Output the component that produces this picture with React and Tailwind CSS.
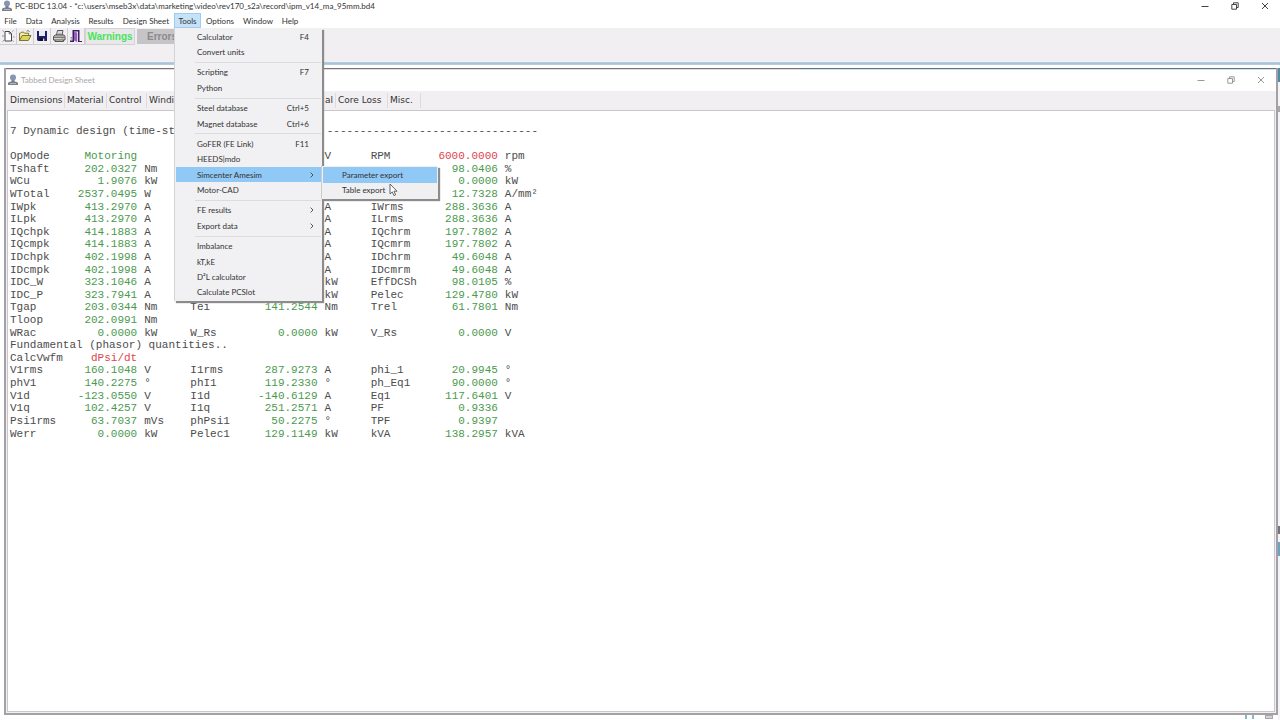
import React from 'react';

const MENUS_BEFORE = [
  { label: 'File', width: 'w-[21px]' },
  { label: 'Data', width: 'w-[26px]' },
  { label: 'Analysis', width: 'w-[37px]' },
  { label: 'Results', width: 'w-[34px]' },
  { label: 'Design Sheet', width: 'w-[56px]' },
];

const MENUS_AFTER = [
  { label: 'Options', width: 'w-[38px]' },
  { label: 'Window', width: 'w-[38px]' },
  { label: 'Help', width: 'w-[26px]' },
];

const TOOL_ITEMS = [
  { label: 'Calculator', keys: 'F4' },
  { label: 'Convert units' },
  null,
  { label: 'Scripting', keys: 'F7' },
  { label: 'Python' },
  null,
  { label: 'Steel database', keys: 'Ctrl+5' },
  { label: 'Magnet database', keys: 'Ctrl+6' },
  null,
  { label: 'GoFER (FE Link)', keys: 'F11' },
  { label: 'HEEDS|mdo' },
  { label: 'Simcenter Amesim', children: ['Parameter export', 'Table export'] },
  { label: 'Motor-CAD' },
  null,
  { label: 'FE results', children: [] },
  { label: 'Export data', children: [] },
  null,
  { label: 'Imbalance' },
  { label: 'kT,kE' },
  { label: 'D²L calculator' },
  { label: 'Calculate PCSlot' },
];

const TABS = [
  { label: 'Dimensions', width: 'w-[57px]' },
  { label: 'Material', width: 'w-[42px]' },
  { label: 'Control', width: 'w-[40px]' },
  { label: 'Windi', width: 'w-[61px]' },
  { label: 'al', width: 'w-[128px] text-right' },
  { label: 'Core Loss', width: 'w-[52px]' },
  { label: 'Misc.', width: 'w-[33px]' },
];

// label, value, unit for each of the three column groups
const ROWS = [
  ['OpMode', 'Motoring', '', '', '', 'V', 'RPM', '6000.0000', 'rpm'],
  ['Tshaft', '202.0327', 'Nm', '', '', '', '', '98.0406', '%'],
  ['WCu', '1.9076', 'kW', '', '', '', '', '0.0000', 'kW'],
  ['WTotal', '2537.0495', 'W', '', '', '', '', '12.7328', 'A/mm²'],
  ['IWpk', '413.2970', 'A', '', '', 'A', 'IWrms', '288.3636', 'A'],
  ['ILpk', '413.2970', 'A', '', '', 'A', 'ILrms', '288.3636', 'A'],
  ['IQchpk', '414.1883', 'A', '', '', 'A', 'IQchrm', '197.7802', 'A'],
  ['IQcmpk', '414.1883', 'A', '', '', 'A', 'IQcmrm', '197.7802', 'A'],
  ['IDchpk', '402.1998', 'A', '', '', 'A', 'IDchrm', '49.6048', 'A'],
  ['IDcmpk', '402.1998', 'A', '', '', 'A', 'IDcmrm', '49.6048', 'A'],
  ['IDC_W', '323.1046', 'A', '', '', 'kW', 'EffDCSh', '98.0105', '%'],
  ['IDC_P', '323.7941', 'A', '', '', 'kW', 'Pelec', '129.4780', 'kW'],
  ['Tgap', '203.0344', 'Nm', 'Tei', '141.2544', 'Nm', 'Trel', '61.7801', 'Nm'],
  ['Tloop', '202.0991', 'Nm', '', '', '', '', '', ''],
  ['WRac', '0.0000', 'kW', 'W_Rs', '0.0000', 'kW', 'V_Rs', '0.0000', 'V'],
  ['Fundamental (phasor) quantities..'],
  ['CalcVwfm', 'dPsi/dt', '', '', '', '', '', '', ''],
  ['V1rms', '160.1048', 'V', 'I1rms', '287.9273', 'A', 'phi_1', '20.9945', '°'],
  ['phV1', '140.2275', '°', 'phI1', '119.2330', '°', 'ph_Eq1', '90.0000', '°'],
  ['V1d', '-123.0550', 'V', 'I1d', '-140.6129', 'A', 'Eq1', '117.6401', 'V'],
  ['V1q', '102.4257', 'V', 'I1q', '251.2571', 'A', 'PF', '0.9336', ''],
  ['Psi1rms', '63.7037', 'mVs', 'phPsi1', '50.2275', '°', 'TPF', '0.9397', ''],
  ['Werr', '0.0000', 'kW', 'Pelec1', '129.1149', 'kW', 'kVA', '138.2957', 'kVA'],
];

const RED_VALUES = ['6000.0000', 'dPsi/dt'];

const AppIcon = () => (
  <svg className="w-[12px] h-[12px] shrink-0" viewBox="0 0 12 12" aria-hidden="true">
    <path d="M4.5 6h3v3h-3z" fill="#77777f" />
    <circle cx="6" cy="3.6" r="3" fill="#8796b0" />
    <path d="M1 11V9.5C1 8 3 8 4 7.6h4c1 .4 3 .4 3 1.9V11z" fill="#7e8088" />
    <path d="M3 9.5h6" stroke="#a9b4d0" strokeWidth="1" />
  </svg>
);

const NewIcon = () => (
  <svg className="w-[14px] h-[14px]" viewBox="0 0 14 14" aria-hidden="true">
    <path d="M4 2.5h4.5l2 2v7.5H4z" fill="#fff" stroke="#444" strokeWidth="1" />
    <path d="M8.2 2.5v2.3h2.3" fill="none" stroke="#444" strokeWidth=".8" />
    <path d="M1.5 1.5l1.5 1.2M1 7h2M1.5 12.5L3 11.3M12.5 1.5l-1.2 1M12 8h1.5M12.7 12.5l-1.2-1" stroke="#777" strokeWidth=".8" />
  </svg>
);

const OpenIcon = () => (
  <svg className="w-[14px] h-[14px]" viewBox="0 0 14 14" aria-hidden="true">
    <path d="M1.5 11.5V4.2h1l.8-1h2.5l.8 1h4v2" fill="#f4ec9c" stroke="#6d6a2c" strokeWidth=".9" />
    <path d="M1.5 11.5l2.7-5h8.8l-2.7 5z" fill="#dcd45c" stroke="#6d6a2c" strokeWidth=".9" />
    <path d="M8.5 2.2c1.2-1 2.4-.6 3 .8" fill="none" stroke="#555" strokeWidth=".8" />
  </svg>
);

const SaveIcon = () => (
  <svg className="w-[14px] h-[14px]" viewBox="0 0 14 14" aria-hidden="true">
    <path d="M2 2h10v10H3l-1-1z" fill="#20206c" />
    <path d="M4 2h6v5H4z" fill="#e8eaf4" />
    <path d="M4.5 9h5v3h-5z" fill="#111128" />
    <path d="M8 9.5h1.3V12H8z" fill="#dadde8" />
  </svg>
);

const PrintIcon = () => (
  <svg className="w-[14px] h-[14px]" viewBox="0 0 14 14" aria-hidden="true">
    <path d="M4.5 6l1-4.5H11L10 6z" fill="#fff" stroke="#444" strokeWidth=".9" />
    <path d="M6 3h3.8M5.8 4.5h3.6" stroke="#888" strokeWidth=".6" />
    <path d="M1.5 7.5L3 6h9l1 1.5V11H1.5z" fill="#d4d4d4" stroke="#444" strokeWidth=".9" />
    <path d="M1.8 8.2h10.8M3 11v1.5h8.5V11" fill="none" stroke="#444" strokeWidth=".9" />
    <path d="M9.5 9.6h1.8" stroke="#c0b840" strokeWidth="1" />
  </svg>
);

const ExitIcon = () => (
  <svg className="w-[14px] h-[14px]" viewBox="0 0 14 14" aria-hidden="true">
    <path d="M3.5 1h7v11h2.5v1H9V2.5H5V13H1v-1.5h2.5z" fill="#38205c" />
    <path d="M5 2.2l3.2 1.6V13L5 11.6z" fill="#9a5cc0" />
    <path d="M1.5 8.5h1.6M1.5 10h1.6" stroke="#7b6a90" strokeWidth=".8" />
  </svg>
);

const TOOLBAR = [
  { label: 'New', Icon: NewIcon },
  { label: 'Open', Icon: OpenIcon },
  { label: 'Save', Icon: SaveIcon },
  { label: 'Print', Icon: PrintIcon },
  { label: 'Exit', Icon: ExitIcon },
];

const WindowControls = ({ className }) => (
  <div className={`flex items-center gap-[22px] ${className}`}>
    <button aria-label="Minimise">
      <svg className="w-[8px] h-[8px]" viewBox="0 0 8 8"><path d="M.5 4.5h7" stroke="currentColor" /></svg>
    </button>
    <button aria-label="Restore">
      <svg className="w-[8px] h-[8px]" viewBox="0 0 8 8" fill="none" stroke="currentColor">
        <path d="M.8 2.5h4.7v4.7H.8zM2.5 2.3V.8h4.7v4.7H5.7" />
      </svg>
    </button>
    <button aria-label="Close">
      <svg className="w-[8px] h-[8px]" viewBox="0 0 8 8" stroke="currentColor"><path d="M1 1l6 6M7 1L1 7" /></svg>
    </button>
  </div>
);

const SubMenu = ({ items }) => (
  <div
    role="menu"
    className="absolute left-[145px] -top-px w-[117px] h-[33px] p-px flex flex-col bg-[#f0eff1] border-l border-[#cccccc] shadow-[2px_2px_1px_#8c8c8c]"
  >
    {items.map((item, index) => (
      <button
        key={item}
        role="menuitem"
        className={`flex-1 flex items-center pl-[19px] ${index === 0 ? 'bg-[#90c8f6]' : ''}`}
      >
        {item}
      </button>
    ))}
    <svg className="absolute left-[67px] top-[17px] w-[9px] h-[14px]" viewBox="0 0 9 14" aria-hidden="true">
      <path d="M1 1v10l2.3-2.1L5 12.6l1.6-.8L5 8.2h3z" fill="#fff" stroke="#555" strokeWidth=".9" />
    </svg>
  </div>
);

const ToolsMenu = () => (
  <div
    role="menu"
    className="absolute z-10 left-0 top-full w-[148px] h-[273px] p-px flex flex-col bg-[#f1f0f2] border-l border-[#d4d4d4] text-[#333] shadow-[2px_2px_1px_#8c8c8c]"
  >
    {TOOL_ITEMS.map((item, index) =>
      item === null ? (
        <div key={index} className="h-[5px] flex items-center pl-[19px]">
          <div className="flex-1 h-px bg-[#dcdcdc]" />
        </div>
      ) : (
        <div
          key={item.label}
          className={`relative flex-1 flex ${item.children?.length ? 'bg-[#90c8f6]' : ''}`}
        >
          <button role="menuitem" className="flex-1 flex items-center justify-between pl-[21px] pr-[12px]">
            <span>{item.label}</span>
            {item.keys && <span>{item.keys}</span>}
            {item.children && (
              <svg className="w-[4px] h-[6px] -mr-[5px]" viewBox="0 0 4 6" fill="none" stroke="#444" strokeWidth=".9">
                <path d="M.6.6L3 3 .6 5.4" />
              </svg>
            )}
          </button>
          {item.children?.length > 0 && <SubMenu items={item.children} />}
        </div>
      )
    )}
  </div>
);

const MenuButton = ({ label, width }) => (
  <button className={`text-center whitespace-nowrap ${width}`}>{label}</button>
);

const DataRow = ({ row }) => {
  if (row.length === 1) {
    return (
      <tr>
        <td colSpan={9} className="p-0">{row[0]}</td>
      </tr>
    );
  }

  return (
    <tr>
      {row.map((cell, index) => {
        if (index % 3 === 1) {
          const color = RED_VALUES.includes(cell) ? 'text-[#e0444e]' : 'text-[#4a9a4e]';
          return <td key={index} className={`p-0 text-right ${color}`}>{cell}</td>;
        }
        return <td key={index} className={index % 3 === 2 ? 'p-0 pl-[7px]' : 'p-0'}>{cell}</td>;
      })}
    </tr>
  );
};

const DesignSheet = () => (
  <section className="flex-1 flex flex-col bg-[#f1eff2] border-x-2 border-b-2 border-[#a3a1a5] text-[#333]">
    <div className="h-[2px] flex border-b border-[#e6dadd]">
      <div className="w-5/8 bg-[#77747a]" />
      <div className="flex-1 bg-[#4d7c8e]" />
    </div>
    <header className="h-[21px] flex items-center bg-white pl-px pr-[11px] pb-[2px] text-[#a8a8a8]">
      <AppIcon />
      <h2 className="pl-[2px] flex-1">Tabbed Design Sheet</h2>
      <WindowControls className="text-[#999]" />
    </header>

    <nav className="h-[19px] flex items-center pl-[2px] font-['DejaVu_Sans','Noto_Sans',sans-serif] text-[9px]">
      {TABS.map((tab) => (
        <button key={tab.label} className={`h-[15px] px-[2px] border-r border-[#dddbdf] text-left whitespace-nowrap ${tab.width}`}>
          {tab.label}
        </button>
      ))}
    </nav>

    <div className="flex-1 mx-px mb-px bg-white border border-[#c9c7cb] pl-[2px] pt-[14px] font-['Courier_New','Liberation_Mono',monospace] text-[11px] leading-[12px] text-[#4c4c4c]">
      <h3 className="h-[25px] flex justify-between w-[528px] whitespace-nowrap">
        <span>7 Dynamic design (time-st</span>
        <span>{'-'.repeat(32)}</span>
      </h3>
      <table className="table-fixed w-[541px] h-[290px] border-collapse whitespace-nowrap">
        <colgroup>
          {[0, 1, 2].map((group) => (
            <React.Fragment key={group}>
              <col className="w-[60px]" />
              <col className="w-[67px]" />
              <col className="w-[53px]" />
            </React.Fragment>
          ))}
        </colgroup>
        <tbody>
          {ROWS.map((row) => (
            <DataRow key={row[0]} row={row} />
          ))}
        </tbody>
      </table>
    </div>
  </section>
);

export default function App() {
  return (
    <div className="h-screen flex flex-col overflow-hidden bg-white font-['Lato','Noto_Sans',sans-serif] text-[8px] text-[#333]">
      <header className="h-[13px] flex items-center pl-px pr-[11px] pb-px leading-[12px]">
        <AppIcon />
        <h1 className="flex-1 pl-[2px]">
          PC-BDC 13.04 - *c:\users\mseb3x\data\marketing\video\rev170_s2a\record\ipm_v14_ma_95mm.bd4
        </h1>
        <WindowControls className="text-[#444]" />
      </header>

      <nav className="h-[15px] flex">
        {MENUS_BEFORE.map((menu) => (
          <MenuButton key={menu.label} {...menu} />
        ))}
        <div className="relative flex">
          <button className="w-[27px] bg-[#c5e2f9] border border-[#9fcdf2]">Tools</button>
          <ToolsMenu />
        </div>
        {MENUS_AFTER.map((menu) => (
          <MenuButton key={menu.label} {...menu} />
        ))}
      </nav>

      <div className="h-[34px] bg-[#f1eff2] flex items-start">
        {TOOLBAR.map(({ label, Icon }) => (
          <button
            key={label}
            aria-label={label}
            className="w-[17px] h-[17px] flex items-center justify-center border-r border-b border-[#cfcdd1]"
          >
            <Icon />
          </button>
        ))}
        <div className="w-[50px] h-[17px] border border-[#d4d2d6] bg-[#e9e7ea] text-center font-['Liberation_Sans',sans-serif] font-bold text-[10px] leading-[16px] text-[#48e45c]">
          Warnings
        </div>
        <div className="ml-[2px] mt-px w-[50px] h-[15px] bg-[#c6c4c7] text-center font-['Liberation_Sans',sans-serif] font-bold text-[10px] leading-[16px] text-[#8c8a8d]">
          Errors
        </div>
      </div>
      <div className="h-[3px] border-y border-[#b4cbe0] bg-[#a6c4dc]" />

      <main className="flex-1 flex pt-[3px] pl-[4px]">
        <div className="flex-1 flex flex-col">
          <DesignSheet />
          <div className="h-[5px] flex justify-end gap-[11px] pr-[5px]">
            <div className="w-[9px] h-[4px] border-x-2 border-[#8fb4c8]" />
            <div className="w-[8px] h-[4px] border border-[#a9a7ab] bg-[#d4d2d6]" />
          </div>
        </div>
        <div className="w-[2px] flex flex-col bg-[#f4f4f4]">
          <div className="h-[14px] bg-[#4f8ba3]" />
          <div className="h-[24px]" />
          <div className="h-[6px] bg-[#a9a7ab]" />
          <div className="flex-1" />
          <div className="h-[8px] bg-[#77747a]" />
          <div className="h-[8px]" />
          <div className="h-[14px] bg-[#6fa3bf]" />
          <div className="h-[164px]" />
        </div>
      </main>
    </div>
  );
}
